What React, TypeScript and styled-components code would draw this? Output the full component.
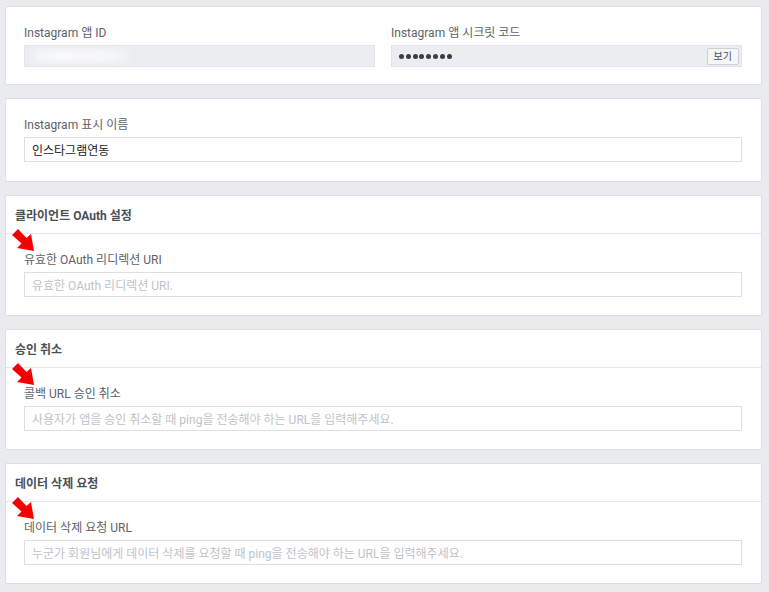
import React from 'react';
import styled, { createGlobalStyle } from 'styled-components';

const GlobalStyle = createGlobalStyle`
    html, body {
        margin: 0;
        padding: 0;
        background: #e9ebee;
    }
    body {
        font-family: Roboto, "Noto Sans CJK KR", "Liberation Sans", sans-serif;
        -webkit-font-smoothing: antialiased;
    }
`;

const Page = styled.div`
    display: flex;
    flex-direction: column;
    gap: 13px;
    width: 769px;
    padding: 6px 7px 8px 5px;
    background: #e9ebee;
    min-height: 592px;
    box-sizing: border-box;
`;

const Card = styled.section`
    position: relative;
    background: #fff;
    border: 1px solid #dddfe2;
    border-radius: 2px;
`;

const CardHeader = styled.div`
    height: 37px;
    display: flex;
    align-items: center;
    padding: 0 9px;
    border-bottom: 1px solid #e5e6e9;
    font-size: 12px;
    font-weight: 700;
    color: #4b4f56;
`;

const CardBody = styled.div<{ $top?: number; $bottom?: number }>`
    padding: ${({ $top }) => $top ?? 18}px 19px ${({ $bottom }) => $bottom ?? 18}px 18px;
`;

const Row = styled.div`
    display: grid;
    grid-template-columns: 1fr 1fr;
    column-gap: 16px;
`;

const Field = styled.div`
    display: flex;
    flex-direction: column;
`;

const Label = styled.label`
    font-size: 12px;
    line-height: 16px;
    color: #5d6169;
    margin-bottom: 4px;
`;

const InputBox = styled.div<{ $readonly?: boolean }>`
    position: relative;
    display: flex;
    align-items: center;
    height: ${({ $readonly }) => ($readonly ? 22 : 25)}px;
    box-sizing: border-box;
    padding: 0 2px 0 7px;
    border: 1px solid ${({ $readonly }) => ($readonly ? '#e3e4e7' : '#dddfe2')};
    background: ${({ $readonly }) => ($readonly ? '#ebedf0' : '#fff')};
    font-size: 12px;
    color: #1d2129;
`;

const Placeholder = styled.span`
    color: #bec3c9;
    font-size: 12px;
`;

const Blurred = styled.span`
    display: inline-block;
    width: 100px;
    height: 12px;
    margin-left: 2px;
    background: linear-gradient(90deg, rgba(255,255,255,0.5), #fafafb 30%, #f6f7f8 80%, rgba(255,255,255,0));
    filter: blur(3px);
`;

const Dots = styled.span`
    flex: 1;
    display: flex;
    gap: 1.8px;
`;

const Dot = styled.i`
    width: 5px;
    height: 5px;
    border-radius: 50%;
    background: #3a3d42;
`;

const ShowButton = styled.button`
    height: 17px;
    padding: 0 6px;
    border: 1px solid #ccd0d5;
    background: #f5f6f7;
    border-radius: 2px;
    font-family: inherit;
    font-size: 10px;
    color: #4b4f56;
    line-height: 15px;
`;

const Arrow = styled.svg`
    position: absolute;
    left: 4px;
    top: 31px;
    width: 26px;
    height: 26px;
`;

const RedArrow = () => (
    <Arrow viewBox="0 0 26 26">
        <path d="M2 8 L8 2 L16.5 11 L21 7 L24 24 L7 21 L11.5 16.5 Z" fill="#f50000" />
    </Arrow>
);

interface UrlSectionProps {
    title: string;
    label: string;
    placeholder: string;
}

const UrlSection = ({ title, label, placeholder }: UrlSectionProps) => (
    <Card>
        <CardHeader>{title}</CardHeader>
        <RedArrow />
        <CardBody>
            <Field>
                <Label>{label}</Label>
                <InputBox>
                    <Placeholder>{placeholder}</Placeholder>
                </InputBox>
            </Field>
        </CardBody>
    </Card>
);

const App = () => {
    return (
        <>
            <GlobalStyle />
            <Page>
                <Card>
                    <CardBody $top={18} $bottom={17}>
                        <Row>
                            <Field>
                                <Label>Instagram 앱 ID</Label>
                                <InputBox $readonly>
                                    <Blurred />
                                </InputBox>
                            </Field>
                            <Field>
                                <Label>Instagram 앱 시크릿 코드</Label>
                                <InputBox $readonly>
                                    <Dots>
                                        {Array.from({ length: 8 }).map((_, i) => (
                                            <Dot key={i} />
                                        ))}
                                    </Dots>
                                    <ShowButton>보기</ShowButton>
                                </InputBox>
                            </Field>
                        </Row>
                    </CardBody>
                </Card>
                <Card>
                    <CardBody $top={18} $bottom={19}>
                        <Field>
                            <Label>Instagram 표시 이름</Label>
                            <InputBox>인스타그램연동</InputBox>
                        </Field>
                    </CardBody>
                </Card>
                <UrlSection
                    title="클라이언트 OAuth 설정"
                    label="유효한 OAuth 리디렉션 URI"
                    placeholder="유효한 OAuth 리디렉션 URI."
                />
                <UrlSection
                    title="승인 취소"
                    label="콜백 URL 승인 취소"
                    placeholder="사용자가 앱을 승인 취소할 때 ping을 전송해야 하는 URL을 입력해주세요."
                />
                <UrlSection
                    title="데이터 삭제 요청"
                    label="데이터 삭제 요청 URL"
                    placeholder="누군가 회원님에게 데이터 삭제를 요청할 때 ping을 전송해야 하는 URL을 입력해주세요."
                />
            </Page>
        </>
    );
};

export default App;
